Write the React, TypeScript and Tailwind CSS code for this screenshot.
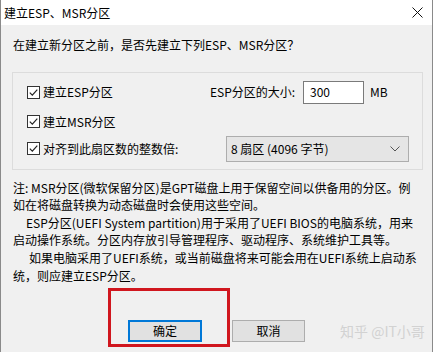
import React from "react";

const font = { fontFamily: '"Noto Sans CJK SC", "Noto Sans", sans-serif' };

function Check({ label }: { label: string }) {
  return (
    <div className="flex items-center">
      <div className="w-[13px] h-[13px] border border-[#333] bg-white flex items-center justify-center">
        <svg width="11" height="11" viewBox="0 0 11 11">
          <path d="M1.8 5.6 L4.3 8.1 L9.3 2.6" fill="none" stroke="#222" strokeWidth="1.2" />
        </svg>
      </div>
      <span className="ml-[3px] text-[12px] leading-[16px] text-black">{label}</span>
    </div>
  );
}

export default function App() {
  return (
    <div className="w-[434px] h-[352px] bg-white" style={font}>
      <div className="relative w-[433px] h-[352px] border-l border-r border-[#8a8a8a] bg-[#f0f0f0] overflow-hidden">
        {/* title bar */}
        <div className="h-[25px] bg-white flex items-center justify-between pl-[3px] pr-[9px]">
          <span className="text-[12px] leading-[16px] text-black">建立ESP、MSR分区</span>
          <svg width="11" height="11" viewBox="0 0 11 11">
            <path d="M0.5 0.5 L10.5 10.5 M10.5 0.5 L0.5 10.5" stroke="#111" strokeWidth="1" />
          </svg>
        </div>

        {/* prompt */}
        <div className="pl-[12px] pt-[11px] text-[12px] leading-[17.6px] text-black">
          在建立新分区之前，是否先建立下列ESP、MSR分区？
        </div>

        {/* group box */}
        <div className="ml-[11px] mt-[18px] w-[411px] h-[98px] border border-[#dcdcdc] flex flex-col">
          <div className="flex items-center mt-[8px] h-[23px]">
            <div className="w-[197px] pl-[14px]">
              <Check label="建立ESP分区" />
            </div>
            <span className="w-[93px] text-[12px] leading-[16px] text-black">ESP分区的大小:</span>
            <div className="w-[61px] h-[23px] border border-[#7a7a7a] bg-white flex items-center pl-[6px] text-[12px] text-black">
              300
            </div>
            <span className="ml-[6px] text-[12px] leading-[16px] text-black">MB</span>
          </div>
          <div className="flex items-center mt-[7px] h-[22px] pl-[14px]">
            <Check label="建立MSR分区" />
          </div>
          <div className="flex items-center mt-[3px] h-[26px]">
            <div className="w-[213px] pl-[14px]">
              <Check label="对齐到此扇区数的整数倍:" />
            </div>
            <div className="w-[183px] h-[26px] border border-[#adadad] bg-[#e5e5e5] flex items-center justify-between pl-[4px] pr-[8px]">
              <span className="text-[12px] leading-[16px] text-black">8 扇区 (4096 字节)</span>
              <svg width="10" height="6" viewBox="0 0 10 6">
                <path d="M0.5 0.5 L5 5 L9.5 0.5" fill="none" stroke="#555" strokeWidth="1" />
              </svg>
            </div>
          </div>
        </div>

        {/* note */}
        <div className="pl-[12px] pr-[12px] mt-[9px] text-[12px] leading-[17.6px] text-black">
          <div>注: MSR分区(微软保留分区)是GPT磁盘上用于保留空间以供备用的分区。例如在将磁盘转换为动态磁盘时会使用这些空间。</div>
          <div className="indent-[13px]">ESP分区(UEFI System partition)用于采用了UEFI BIOS的电脑系统，用来启动操作系统。分区内存放引导管理程序、驱动程序、系统维护工具等。</div>
          <div className="indent-[16px]">如果电脑采用了UEFI系统，或当前磁盘将来可能会用在UEFI系统上启动系统，则应建立ESP分区。</div>
        </div>

        {/* buttons */}
        <div className="absolute left-[127px] top-[320px] flex gap-[30px]">
          <div className="w-[74px] h-[22px] border-2 border-[#0078d7] bg-[#e1e1e1] flex items-center justify-center text-[12px] text-black">
            确定
          </div>
          <div className="w-[73px] h-[22px] border border-[#adadad] bg-[#e1e1e1] flex items-center justify-center text-[12px] text-black">
            取消
          </div>
        </div>

        {/* red annotation */}
        <div className="absolute left-[107px] top-[288px] w-[122px] h-[59px] border-[3px] border-[#d0161e]" />

        {/* watermark */}
        <div className="absolute left-[339px] top-[321px] text-[14px] leading-[20px] text-[#d2d2d2]">
          知乎 @IT小哥
        </div>
      </div>
    </div>
  );
}
